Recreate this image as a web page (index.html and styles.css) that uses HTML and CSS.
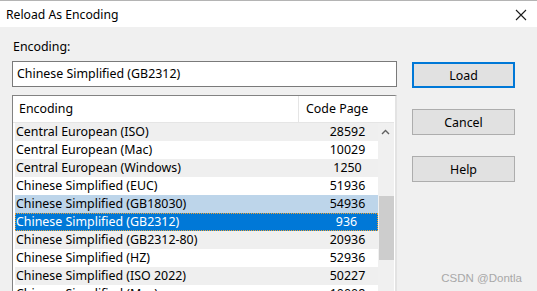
FILE: index.html
```html
<!DOCTYPE html>
<html lang="en">
<head>
    <meta charset="UTF-8">
    <meta name="viewport" content="width=device-width, initial-scale=1.0">
    <title>Reload As Encoding</title>
    <link rel="stylesheet" href="styles.css">
</head>
<body>

    <div class="titlebar">
        <span class="title">Reload As Encoding</span>
        <svg class="close" width="12" height="12" viewBox="0 0 12 12">
            <path d="M1 1 L11 11 M11 1 L1 11" stroke="#1a1a1a" stroke-width="1.1" fill="none"/>
        </svg>
    </div>

    <div class="dialog">
        <!-- left side -->
        <div class="main">
            <div class="label">Encoding:</div>
            <div class="field">Chinese Simplified (GB2312)</div>

            <div class="list">
                <div class="list-head">
                    <div class="col-name">Encoding</div>
                    <div class="col-code">Code Page</div>
                </div>
                <div class="list-body">
                    <div class="rows">
                        <div class="row alt"><span class="name">Central European (ISO)</span><span class="code">28592</span></div>
                        <div class="row"><span class="name">Central European (Mac)</span><span class="code">10029</span></div>
                        <div class="row alt"><span class="name">Central European (Windows)</span><span class="code">1250</span></div>
                        <div class="row"><span class="name">Chinese Simplified (EUC)</span><span class="code">51936</span></div>
                        <div class="row hover"><span class="name">Chinese Simplified (GB18030)</span><span class="code">54936</span></div>
                        <div class="row selected"><span class="name">Chinese Simplified (GB2312)</span><span class="code">936</span></div>
                        <div class="row alt"><span class="name">Chinese Simplified (GB2312-80)</span><span class="code">20936</span></div>
                        <div class="row"><span class="name">Chinese Simplified (HZ)</span><span class="code">52936</span></div>
                        <div class="row alt"><span class="name">Chinese Simplified (ISO 2022)</span><span class="code">50227</span></div>
                        <div class="row"><span class="name">Chinese Simplified (Mac)</span><span class="code">10008</span></div>
                    </div>
                    <div class="scrollbar">
                        <svg class="arrow" width="9" height="6" viewBox="0 0 9 6">
                            <path d="M1 5 L4.5 1.5 L8 5" stroke="#606060" stroke-width="1.4" fill="none"/>
                        </svg>
                        <div class="thumb"></div>
                    </div>
                </div>
            </div>
        </div>

        <!-- buttons -->
        <div class="buttons">
            <button class="default">Load</button>
            <button>Cancel</button>
            <button>Help</button>
        </div>
    </div>

    <div class="watermark">CSDN @Dontla</div>

</body>
</html>
```

FILE: styles.css
```css
body {
    margin: 0;
    background: #f0f0f0;
    font-family: "Noto Sans", "Noto Sans CJK SC", sans-serif;
    font-size: 12.4px;
    color: #000;
    height: 291px;
    overflow: hidden;
    position: relative;
}
.titlebar {
    height: 26px;
    background: #fff;
    border-top: 1px solid #b4b4b4;
    display: flex;
    align-items: center;
    justify-content: space-between;
    padding: 0 10px 0 6px;
}
.title {
    font-size: 12.2px;
}
.close {
    margin-top: 1px;
}
.dialog {
    display: flex;
    padding-left: 12px;
}
.main {
    width: 385px;
}
.label {
    height: 16px;
    line-height: 16px;
    margin-top: 12px;
    padding-left: 1px;
}
.field {
    margin-top: 6px;
    height: 24px;
    line-height: 24px;
    border: 1px solid #7a7a7a;
    background: #fff;
    padding-left: 4px;
}
.list {
    margin-top: 8px;
    height: 200px;
    border: 1px solid #828282;
    border-right: 2px solid #e3e3e3;
    background: #fff;
}
.list-head {
    display: flex;
    height: 26px;
    border-bottom: 1px solid #e5e5e5;
    margin-right: 1px;
}
.list-head div {
    line-height: 26px;
}
.col-name {
    width: 279px;
    padding-left: 6px;
    border-right: 1px solid #e5e5e5;
}
.col-code {
    padding-left: 7px;
}
.list-body {
    display: flex;
    padding-left: 2px;
}
.rows {
    width: 363px;
}
.row {
    display: flex;
    height: 18px;
    line-height: 18px;
    box-sizing: border-box;
}
.row.alt {
    background: #efefef;
}
.row.hover {
    background: #bdd5ea;
}
.row.selected {
    background: #0078d7;
    color: #fff;
    border: 1px dotted #f0a030;
    line-height: 16px;
}
.name {
    width: 283px;
    padding-left: 1px;
}
.row.selected .name {
    padding-left: 0;
    width: 282px;
}
.code {
    flex: 1;
    text-align: center;
    padding-left: 18px;
}
.scrollbar {
    width: 16px;
    background: #f0f0f0;
    height: 173px;
    position: relative;
}
.arrow {
    position: absolute;
    left: 3px;
    top: 6px;
}
.thumb {
    position: absolute;
    left: 1px;
    right: 0;
    top: 73px;
    height: 64px;
    background: #cdcdcd;
}
.buttons {
    display: flex;
    flex-direction: column;
    gap: 21px;
    margin-left: 15px;
    margin-top: 35px;
}
.buttons button {
    width: 103px;
    height: 26px;
    background: #e1e1e1;
    border: 1px solid #adadad;
    font-family: "Noto Sans", "Noto Sans CJK SC", sans-serif;
    font-size: 12.4px;
    color: #000;
    padding: 0;
}
.buttons button.default {
    border: 2px solid #0078d7;
}
.watermark {
    position: absolute;
    right: 15px;
    bottom: 7px;
    font-family: "Liberation Sans", Arial, sans-serif;
    font-size: 11.5px;
    color: #a8a8a8;
}
```
